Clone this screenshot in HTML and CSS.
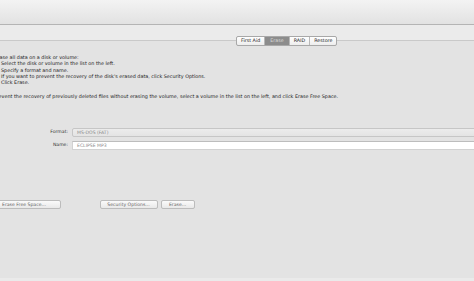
FILE: index.html
```html
<!DOCTYPE html>
<html>
<head>
    <title>Disk Utility - Erase</title>
    <link rel="stylesheet" href="styles.css">
</head>
<body>
    <div class="window">
        <div class="toolbar"></div>
        <div class="tabbar">
            <div class="tabs">
                <span class="tab">First Aid</span>
                <span class="tab active">Erase</span>
                <span class="tab">RAID</span>
                <span class="tab">Restore</span>
            </div>
        </div>
        <div class="pane">
            <div class="help">
                <p class="lead">To erase all data on a disk or volume:</p>
                <ol>
                    <li>Select the disk or volume in the list on the left.</li>
                    <li>Specify a format and name.</li>
                    <li>If you want to prevent the recovery of the disk's erased data, click Security Options.</li>
                    <li>Click Erase.</li>
                </ol>
                <p class="lead second">To prevent the recovery of previously deleted files without erasing the volume, select a volume in the list on the left, and click Erase Free Space.</p>
            </div>
            <div class="form">
                <label>Format:</label>
                <div class="field popup">MS-DOS (FAT)</div>
                <label>Name:</label>
                <div class="field text">ECLIPSE MP3</div>
            </div>
            <div class="buttons">
                <button class="free">Erase Free Space...</button>
                <button class="security">Security Options...</button>
                <button>Erase...</button>
            </div>
        </div>
    </div>
</body>
</html>
```

FILE: styles.css
```css
body {
    margin: 0;
    background-color: #e3e3e3;
    font-family: "DejaVu Sans", "Liberation Sans", sans-serif;
    color: #222;
    overflow: hidden;
}
.window {
    width: 474px;
    height: 281px;
    overflow: hidden;
    display: flex;
    flex-direction: column;
}
.toolbar {
    height: 24px;
    flex: none;
    background: linear-gradient(#f3f3f3, #e2e2e2);
    border-bottom: 1px solid #b4b4b4;
}
.tabbar {
    height: 15px;
    flex: none;
    background-color: #ebebeb;
    border-bottom: 1px solid #c9c9c9;
}
.tabs {
    display: inline-flex;
    margin: 11px 0 0 236px;
    height: 8px;
    border: 1px solid #a8a8a8;
    border-radius: 2px;
    background: linear-gradient(#ffffff, #ededed);
    font-size: 4.8px;
    line-height: 8px;
    color: #222;
}
.tab {
    padding: 0 4px;
    border-left: 1px solid #b8b8b8;
}
.tab:first-child {
    border-left: none;
}
.tab.active {
    background-color: #8c8c8c;
    color: #d8d8d8;
    padding: 0 5px;
}
.pane {
    flex: 1;
    position: relative;
    border-bottom: 3px solid #eaeaea;
}
.help {
    margin: 13px 0 0 -12px;
    font-size: 4.85px;
    line-height: 6.3px;
    white-space: nowrap;
}
.help p {
    margin: 0;
}
.help ol {
    margin: 0;
    padding-left: 13px;
}
.help p.second {
    margin-top: 8px;
    margin-left: -1px;
}
.form {
    display: grid;
    grid-template-columns: 68px 1fr;
    column-gap: 4px;
    row-gap: 4px;
    margin-top: 28px;
    font-size: 4.6px;
}
.form label {
    text-align: right;
    line-height: 8px;
    color: #333;
}
.field {
    height: 7px;
    line-height: 7px;
    padding-left: 4px;
    color: #8a8a8a;
    margin-right: -4px;
}
.field.popup {
    background: linear-gradient(#ececec, #e4e4e4);
    border: 1px solid #c6c6c6;
    border-radius: 2px;
}
.field.text {
    background-color: #ffffff;
    border: 1px solid #d2d2d2;
    border-top-color: #bdbdbd;
}
.buttons {
    display: flex;
    margin: 50px 0 0 -4px;
}
.buttons button {
    font-family: inherit;
    font-size: 4.6px;
    height: 9px;
    line-height: 7px;
    padding: 0 6px 0 5px;
    color: #666;
    background: linear-gradient(#fafafa, #e9e9e9);
    border: 1px solid #bcbcbc;
    border-radius: 2px;
    margin-right: 3px;
}
.buttons button.free {
    width: 65px;
    text-align: left;
    margin-right: 39px;
}
.buttons button.security {
    width: 58px;
}
.buttons button:last-child {
    width: 34px;
}
```
